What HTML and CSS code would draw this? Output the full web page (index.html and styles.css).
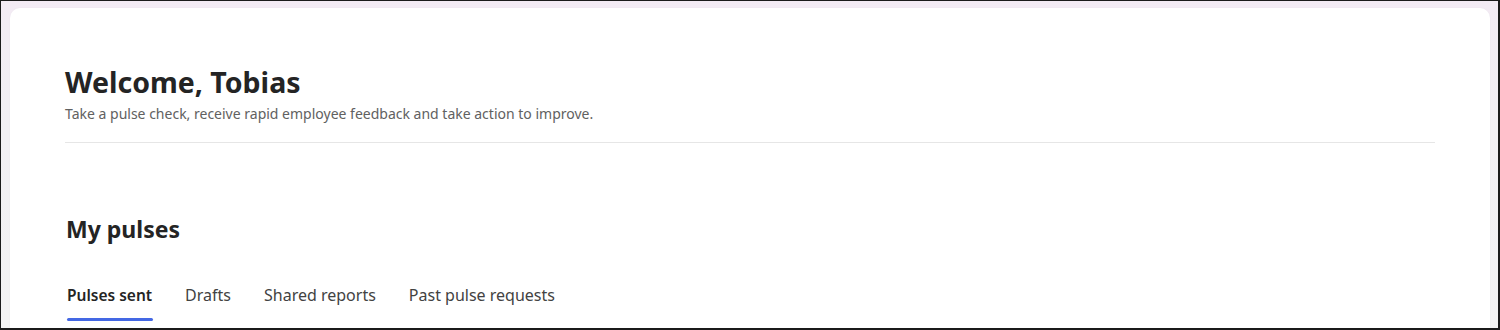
FILE: index.html
```html
<!DOCTYPE html>
<html lang="en">

<head>
  <meta charset="UTF-8" />
  <meta name="viewport" content="width=device-width, initial-scale=1.0" />
  <title>Pulse</title>
  <link rel="stylesheet" href="styles.css">
</head>

<body>
  <div class="frame">
    <div class="card">
      <header class="welcome">
        <h1>Welcome, Tobias</h1>
        <p>Take a pulse check, receive rapid employee feedback and take action to improve.</p>
      </header>

      <section class="pulses">
        <h2>My pulses</h2>
        <nav class="tabs">
          <a href="#" class="tab active">Pulses sent</a>
          <a href="#" class="tab">Drafts</a>
          <a href="#" class="tab">Shared reports</a>
          <a href="#" class="tab">Past pulse requests</a>
        </nav>
      </section>
    </div>
  </div>
</body>

</html>
```

FILE: styles.css
```css
* {
  margin: 0;
  padding: 0;
  box-sizing: border-box;
  font-family: 'Noto Sans', 'Open Sans', sans-serif;
}

html,
body {
  height: 100%;
  overflow: hidden;
}

.frame {
  height: 330px;
  border-style: solid;
  border-color: #1b1b1b;
  border-width: 1px 2px 2px 1px;
  padding: 7px 8px 0 9px;
  background: linear-gradient(180deg, #f3ebf4 0%, #f2f0f4 40%, #f3f3f3 100%);
  display: flex;
}

.card {
  flex: 1;
  background: #fff;
  border-radius: 10px 10px 0 0;
  padding: 56px 55px 0 55px;
  box-shadow: 0 0 2px rgba(0, 0, 0, 0.04);
}

.welcome {
  padding-bottom: 18px;
  border-bottom: 1px solid #e6e6e6;
}

.welcome h1 {
  font-size: 28.5px;
  font-weight: 700;
  line-height: 36px;
  color: #242424;
}

.welcome p {
  margin-top: 4px;
  font-size: 14px;
  line-height: 20px;
  color: #616161;
}

.pulses {
  padding-top: 72px;
}

.pulses h2 {
  font-size: 23px;
  font-weight: 700;
  line-height: 28px;
  color: #242424;
  padding-left: 1px;
}

.tabs {
  display: flex;
  gap: 29px;
  margin-top: 41px;
}

.tab {
  position: relative;
  padding: 0 2px 15px;
  font-size: 16px;
  line-height: 22px;
  color: #424242;
  text-decoration: none;
}

.tab.active {
  color: #242424;
  font-weight: 600;
  font-size: 15.5px;
}

.tab.active::after {
  content: "";
  position: absolute;
  left: 2px;
  right: 1px;
  bottom: 0;
  height: 3px;
  border-radius: 2px;
  background: #4468e4;
}
```
